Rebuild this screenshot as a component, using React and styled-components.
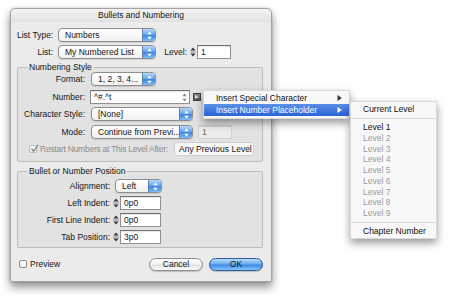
import React from 'react';
import styled, { createGlobalStyle } from 'styled-components';

const GlobalStyle = createGlobalStyle`
  html, body { margin: 0; padding: 0; background: #fff; }
  body {
    font-family: "Liberation Sans", Arial, sans-serif;
    font-size: 8.5px;
    color: #151515;
  }
  * { box-sizing: border-box; }
`;

const Page = styled.div`
  position: relative;
  width: 450px;
  height: 299px;
  padding: 8px 0 0 10px;
  overflow: hidden;
`;

const Dialog = styled.div`
  width: 262px;
  height: 274px;
  display: flex;
  flex-direction: column;
  background: repeating-linear-gradient(#ededed 0 1px, #e9e9e9 1px 2px);
  border: 1px solid #a3a3a3;
  border-radius: 5px 5px 1px 1px;
  box-shadow: 0 5px 10px rgba(0, 0, 0, 0.45), 0 0 2px rgba(0, 0, 0, 0.2);
`;

const TitleBar = styled.div`
  height: 13px;
  line-height: 13px;
  text-align: center;
  border-radius: 5px 5px 0 0;
  background: linear-gradient(#f3f3f3, #e2e2e2);
`;

const Body = styled.div`
  display: flex;
  flex-direction: column;
  padding: 6px 8px 0 6px;
`;

const Row = styled.div`
  display: flex;
  align-items: center;
  height: 14px;
  margin-top: ${(p) => p.$mt || 0}px;
  padding-left: ${(p) => p.$pl || 0}px;
  padding-right: ${(p) => p.$pr || 0}px;
`;

const Label = styled.span`
  width: ${(p) => p.$w}px;
  flex-shrink: 0;
  text-align: right;
  margin-right: ${(p) => (p.$mr != null ? p.$mr : 5)}px;
  margin-left: ${(p) => p.$ml || 0}px;
  white-space: nowrap;
`;

const DimText = styled.span`
  flex: 1;
  white-space: nowrap;
  letter-spacing: -0.25px;
  color: #8d8d8d;
`;

const PopUpBox = styled.div`
  width: ${(p) => p.$w}px;
  height: 14px;
  flex-shrink: 0;
  display: flex;
  border: 1px solid #8e8e8e;
  border-radius: 4px;
  background: linear-gradient(#ffffff, #f1f1f1);
  box-shadow: 0 1px 1px rgba(0, 0, 0, 0.12);
  overflow: hidden;
`;

const PopUpValue = styled.span`
  flex: 1;
  padding-left: 6px;
  line-height: 12px;
  white-space: nowrap;
  overflow: hidden;
`;

const PopUpArrow = styled.span`
  width: 13px;
  display: flex;
  align-items: center;
  justify-content: center;
  border-left: 1px solid #5d80ad;
  background: linear-gradient(#b7d7f8 0%, #6aa8ec 45%, #3e87df 55%, #7ebcf5 100%);
`;

const PlainPopUp = styled.div`
  width: ${(p) => p.$w}px;
  height: 14px;
  flex-shrink: 0;
  display: flex;
  align-items: center;
  justify-content: space-between;
  border: 1px solid #cdcdcd;
  border-radius: 3px;
  background: #f7f7f7;
  padding: 0 3px 0 4px;
  white-space: nowrap;
`;

const Field = styled.div`
  width: ${(p) => p.$w}px;
  height: 14px;
  flex-shrink: 0;
  display: flex;
  align-items: center;
  justify-content: space-between;
  padding: 0 2px 0 3px;
  border: 1px solid ${(p) => (p.$disabled ? '#d2d2d2' : '#8f8f8f')};
  border-top-color: ${(p) => (p.$disabled ? '#c6c6c6' : '#6f6f6f')};
  background: ${(p) => (p.$disabled ? '#ececec' : '#fff')};
  color: ${(p) => (p.$disabled ? '#666' : '#151515')};
  box-shadow: inset 0 1px 1px rgba(0, 0, 0, 0.1);
  margin-left: ${(p) => p.$ml || 0}px;
  white-space: nowrap;
`;

const StepBox = styled.span`
  width: 8px;
  display: flex;
  justify-content: center;
  flex-shrink: 0;
`;

const MenuButton = styled.span`
  width: 8px;
  height: 8px;
  margin-left: 3px;
  border: 1px solid #3f3f3f;
  background: linear-gradient(#8c8c8c, #4f4f4f);
  display: flex;
  align-items: center;
  justify-content: center;
`;

const Group = styled.fieldset`
  margin: ${(p) => p.$mt}px 0 0 0;
  padding: 0 0 ${(p) => p.$pb}px 0;
  width: 246px;
  border: 1px solid #bdbdbd;
  border-radius: 2px;
  background: rgba(0, 0, 0, 0.035);
  min-width: 0;
`;

const Legend = styled.legend`
  margin-left: 9px;
  padding: 0 2px;
  line-height: 10px;
`;

const Check = styled.span`
  width: 8px;
  height: 8px;
  flex-shrink: 0;
  border: 1px solid ${(p) => (p.$dim ? '#bbb' : '#8c8c8c')};
  border-radius: 2px;
  background: linear-gradient(#fff, #ededed);
  margin-right: 3px;
  position: relative;
`;

const Footer = styled.div`
  display: flex;
  align-items: center;
  height: 14px;
  margin-top: 9px;
  padding-left: 2px;
`;

const Spacer = styled.span`
  flex: 1;
`;

const Button = styled.span`
  width: ${(p) => p.$w}px;
  height: 13px;
  margin-left: ${(p) => p.$ml || 0}px;
  border-radius: 7px;
  display: flex;
  align-items: center;
  justify-content: center;
  border: 1px solid ${(p) => (p.$primary ? '#2a5ca3' : '#8f8f8f')};
  background: ${(p) =>
    p.$primary
      ? 'linear-gradient(#b9dbfb 0%, #6aaef2 45%, #3d89e4 55%, #88c6fa 100%)'
      : 'linear-gradient(#ffffff 0%, #f2f2f2 45%, #e2e2e2 55%, #fbfbfb 100%)'};
  box-shadow: 0 1px 1px rgba(0, 0, 0, 0.2);
`;

const Menu = styled.div`
  position: absolute;
  left: ${(p) => p.$x}px;
  top: ${(p) => p.$y}px;
  width: ${(p) => p.$w}px;
  padding: ${(p) => p.$pt}px 0 2px;
  background: rgba(248, 248, 248, 0.97);
  border: 1px solid rgba(0, 0, 0, 0.12);
  box-shadow: 0 4px 8px rgba(0, 0, 0, 0.4);
`;

const MenuItem = styled.div`
  display: flex;
  align-items: center;
  justify-content: space-between;
  height: ${(p) => p.$h || 12}px;
  padding: 0 7px 0 ${(p) => p.$pl || 12}px;
  white-space: nowrap;
  color: ${(p) => (p.$active ? '#fff' : p.$dim ? '#9b9b9b' : '#111')};
  background: ${(p) => (p.$active ? 'linear-gradient(#5b8fe8, #2a64d6)' : 'transparent')};
`;

const Separator = styled.div`
  height: 7px;
  display: flex;
  align-items: center;
  &::after {
    content: '';
    flex: 1;
    height: 1px;
    background: #dcdcdc;
  }
`;

const Arrows = ({ color = '#fff' }) => (
  <svg width="5" height="9" viewBox="0 0 5 9">
    <path d="M2.5 0.5 L4.7 3.3 L0.3 3.3 Z M2.5 8.5 L4.7 5.7 L0.3 5.7 Z" fill={color} />
  </svg>
);

const Stepper = () => (
  <svg width="6" height="10" viewBox="0 0 6 10">
    <path d="M3 0.5 L5.6 3.6 L0.4 3.6 Z M3 9.5 L5.6 6.4 L0.4 6.4 Z" fill="#3a3a3a" />
    <rect x="0.2" y="4.6" width="5.6" height="0.8" fill="#777" />
  </svg>
);

const RightTri = ({ color }) => (
  <svg width="5" height="6" viewBox="0 0 5 6">
    <path d="M0.5 0 L4.8 3 L0.5 6 Z" fill={color} />
  </svg>
);

const CheckMark = () => (
  <svg width="9" height="9" viewBox="0 0 9 9" style={{ position: 'absolute', left: 0, top: -2 }}>
    <path d="M1.5 4.5 L3.6 7.2 L8.2 0.8" stroke="#8a8a8a" strokeWidth="1.4" fill="none" />
  </svg>
);

const PopUp = ({ w, value }) => (
  <PopUpBox $w={w}>
    <PopUpValue>{value}</PopUpValue>
    <PopUpArrow>
      <Arrows />
    </PopUpArrow>
  </PopUpBox>
);

const levels = [2, 3, 4, 5, 6, 7, 8, 9];

const App = () => (
  <Page>
    <GlobalStyle />
    <Dialog>
      <TitleBar>Bullets and Numbering</TitleBar>
      <Body>
        <Row>
          <Label $w={36}>List Type:</Label>
          <PopUp w={98} value="Numbers" />
        </Row>
        <Row $mt={3}>
          <Label $w={36}>List:</Label>
          <PopUp w={98} value="My Numbered List" />
          <Label $w={24} $ml={7} $mr={2}>Level:</Label>
          <StepBox><Stepper /></StepBox>
          <Field $w={34}>1</Field>
        </Row>

        <Group $mt={3} $pb={5}>
          <Legend>Numbering Style</Legend>
          <Row>
            <Label $w={67} $mr={6}>Format:</Label>
            <PopUp w={65} value="1, 2, 3, 4..." />
          </Row>
          <Row $mt={4}>
            <Label $w={67} $mr={5}>Number:</Label>
            <Field $w={100}>
              ^#.^t
              <Arrows color="#8a8a8a" />
            </Field>
            <MenuButton>
              <svg width="4" height="4" viewBox="0 0 4 4">
                <path d="M0 0 L4 2 L0 4 Z" fill="#d8d8d8" />
              </svg>
            </MenuButton>
          </Row>
          <Row $mt={3}>
            <Label $w={67} $mr={6}>Character Style:</Label>
            <PopUp w={102} value="[None]" />
          </Row>
          <Row $mt={4}>
            <Label $w={67} $mr={6}>Mode:</Label>
            <PopUp w={102} value="Continue from Previ..." />
            <Field $w={34} $ml={5} $disabled>1</Field>
          </Row>
          <Row $mt={3} $pl={11} $pr={8}>
            <Check $dim>
              <CheckMark />
            </Check>
            <DimText>Restart Numbers at This Level After:</DimText>
            <PlainPopUp $w={80}>
              Any Previous Level
              <Arrows color="#8a8a8a" />
            </PlainPopUp>
          </Row>
        </Group>

        <Group $mt={4} $pb={3}>
          <Legend>Bullet or Number Position</Legend>
          <Row $mt={3}>
            <Label $w={92}>Alignment:</Label>
            <PopUp w={47} value="Left" />
          </Row>
          <Row $mt={3}>
            <Label $w={92} $mr={2}>Left Indent:</Label>
            <StepBox><Stepper /></StepBox>
            <Field $w={41}>0p0</Field>
          </Row>
          <Row $mt={3}>
            <Label $w={92} $mr={2}>First Line Indent:</Label>
            <StepBox><Stepper /></StepBox>
            <Field $w={41}>0p0</Field>
          </Row>
          <Row $mt={3}>
            <Label $w={92} $mr={2}>Tab Position:</Label>
            <StepBox><Stepper /></StepBox>
            <Field $w={41}>3p0</Field>
          </Row>
        </Group>

        <Footer>
          <Check />
          <span>Preview</span>
          <Spacer />
          <Button $w={54}>Cancel</Button>
          <Button $w={54} $ml={6} $primary>OK</Button>
        </Footer>
      </Body>
    </Dialog>

    <Menu $x={203} $y={90} $w={147} $pt={1}>
      <MenuItem>
        Insert Special Character
        <RightTri color="#333" />
      </MenuItem>
      <MenuItem $active>
        Insert Number Placeholder
        <RightTri color="#fff" />
      </MenuItem>
    </Menu>

    <Menu $x={350} $y={101} $w={87} $pt={2}>
      <MenuItem $h={10.75}>Current Level</MenuItem>
      <Separator />
      <MenuItem $h={10.75}>Level 1</MenuItem>
      {levels.map((n) => (
        <MenuItem key={n} $h={10.75} $dim>
          Level {n}
        </MenuItem>
      ))}
      <Separator />
      <MenuItem $h={10.75}>Chapter Number</MenuItem>
    </Menu>
  </Page>
);

export default App;
